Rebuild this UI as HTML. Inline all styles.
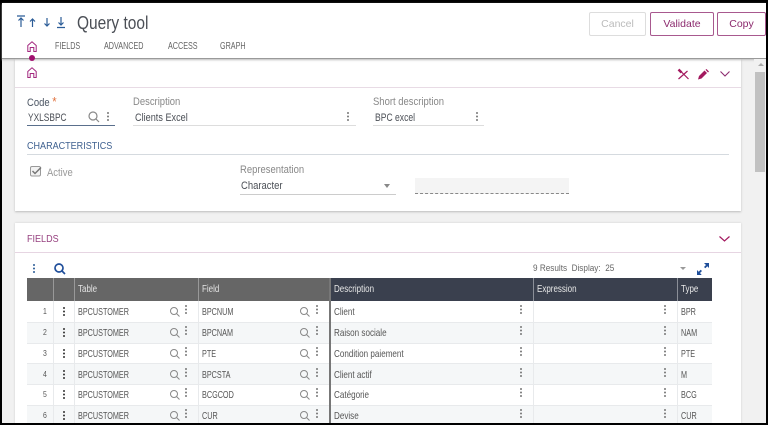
<!DOCTYPE html>
<html><head><meta charset="utf-8"><style>
html,body{margin:0;padding:0;background:#000}
#p{position:relative;width:768px;height:425px;overflow:hidden;background:#000;font-family:"Liberation Sans",sans-serif}
.a{position:absolute}
#p .t{position:absolute;white-space:nowrap;transform:scaleX(.86);transform-origin:0 50%;color:#555;font-size:10px;line-height:12px}
#p .u{transform:scaleX(.72);color:#666;font-size:10px}
#p .c{transform:scaleX(.69);font-size:10.5px}
#p .l{transform:scaleX(.77);font-size:10.5px}
.d{position:absolute;width:2px;height:2px;background:#777;border-radius:50%;box-shadow:0 3.5px 0 #777,0 7px 0 #777}
.k{background:#333;box-shadow:0 3.5px 0 #333,0 7px 0 #333}
svg{position:absolute;overflow:visible}
#b{position:absolute;left:0;top:0;width:768px;height:425px;filter:blur(.3px)}
</style></head><body><div id="p"><div id="b">
<div class="a" style="left:2px;top:3px;width:764px;height:420px;background:#f1f1f1"></div>
<!-- card 1 -->
<div class="a" style="left:15px;top:58px;width:726px;height:153px;background:#fff;box-shadow:0 1px 2px #bbb"></div>
<div class="a" style="left:15px;top:87px;width:726px;height:1px;background:#e8dbe5"></div>
<!-- card 2 -->
<div class="a" style="left:15px;top:223px;width:726px;height:202px;background:#fff;box-shadow:0 0 2px #ccc"></div>
<div class="a" style="left:15px;top:252px;width:726px;height:1px;background:#e6d5e2"></div>
<!-- header -->
<div class="a" style="left:2px;top:3px;width:764px;height:55px;background:#fff;border-bottom:1px solid #9a9a9a;box-shadow:0 1px 2px #bbb"></div>
<!-- scrollbar -->
<div class="a" style="left:754px;top:59px;width:12px;height:364px;background:#f1f1f1"></div>
<div class="a" style="left:755px;top:72px;width:10px;height:100px;background:#c1c1c1"></div>
<div class="a" style="left:758px;top:63px;width:0;height:0;border:3px solid transparent;border-top:0;border-bottom:3px solid #aaa"></div>

<!-- nav arrows -->
<svg style="left:17px;top:15px" width="52" height="14" fill="none" stroke="#2b5c97" stroke-width="1.2">
<path d="M0 1h8M4 12V3M1.500 5.500L4 3l2.500 2.500"/><path d="M15.500 12V4M13 6.500l2.500-2.500 2.500 2.500"/><path d="M30 3v8M27.500 8.500L30 11l2.500-2.500"/><path d="M44 2v8M41.500 7.500L44 10l2.500-2.500M40 12.500h8"/></svg>
<div class="t" style="left:77px;top:13px;font-size:18px;line-height:20px;color:#4b4f56;transform:scaleX(.86)">Query tool</div>
<!-- tabs -->
<svg style="left:27px;top:41px" width="10" height="11" fill="none" stroke="#a3287f" stroke-width="1"><path d="M.8 10.500V4.500L5 .8l4.200 3.700v6H6.800V6.500H3.200v4z"/></svg>
<div class="a" style="left:29px;top:55px;width:6px;height:6px;border-radius:50%;background:#a0106e"></div>
<div class="t u" style="left:55px;top:41px">FIELDS</div>
<div class="t u" style="left:104px;top:41px">ADVANCED</div>
<div class="t u" style="left:168px;top:41px">ACCESS</div>
<div class="t u" style="left:220px;top:41px">GRAPH</div>
<!-- buttons -->
<div class="a" style="left:589px;top:12px;width:55px;height:22px;border:1px solid #ddd;border-radius:2px;text-align:center;font-size:10.500px;line-height:22px;color:#bbb">Cancel</div>
<div class="a" style="left:650px;top:12px;width:62px;height:22px;border:1px solid #a8598f;border-radius:2px;text-align:center;font-size:10.500px;line-height:22px;color:#8c2a6e">Validate</div>
<div class="a" style="left:717px;top:12px;width:47px;height:22px;border:1px solid #a8598f;border-radius:2px;text-align:center;font-size:10.500px;line-height:22px;color:#8c2a6e">Copy</div>

<!-- card 1 content -->
<svg style="left:27px;top:67px" width="10" height="11" fill="none" stroke="#a3287f" stroke-width="1"><path d="M.8 10.500V4.500L5 .8l4.200 3.700v6H6.800V6.500H3.200v4z"/></svg>
<svg style="left:678px;top:69px" width="11" height="11" fill="none" stroke="#a3195f" stroke-width="1.200"><path d="M.5 10L9.500 2M2.500 2l8 8"/><path d="M.5 .5l3 3" stroke-width="2.500"/></svg>
<svg style="left:698px;top:69px" width="11" height="11" fill="#a3195f"><path d="M0 10.500l1-3.500 5.500-5.500 2.500 2.500-5.500 5.500zM7.500.8l1-.8 2.500 2.500-1 1z"/></svg>
<svg style="left:720px;top:71px" width="10" height="6" fill="none" stroke="#8c2a6e" stroke-width="1.100"><path d="M.5.5L5 5 9.500.5"/></svg>

<div class="t" style="left:27px;top:96px;font-size:11px;color:#4b5563">Code <span style="color:#e0703c;font-size:13px">*</span></div>
<div class="t" style="left:133px;top:96px;font-size:11px;color:#888">Description</div>
<div class="t" style="left:373px;top:96px;font-size:11px;color:#888">Short description</div>
<div class="t" style="left:28px;top:112px;font-size:11px;color:#4b4f56;transform:scaleX(.76)">YXLSBPC</div>
<svg style="left:88px;top:111px" width="12" height="12" fill="none" stroke="#888" stroke-width="1.200"><circle cx="5" cy="5" r="4"/><path d="M8 8l3 3"/></svg>
<div class="d" style="left:107px;top:112px"></div>
<div class="a" style="left:27px;top:125px;width:88px;height:1px;background:#5a6f8c"></div>
<div class="t" style="left:135px;top:112px;font-size:11px;color:#4b4f56;transform:scaleX(.83)">Clients Excel</div>
<div class="d" style="left:347px;top:112px"></div>
<div class="a" style="left:133px;top:125px;width:223px;height:1px;background:#ddd"></div>
<div class="t" style="left:375px;top:112px;font-size:11px;color:#4b4f56;transform:scaleX(.78)">BPC excel</div>
<div class="d" style="left:476px;top:112px"></div>
<div class="a" style="left:373px;top:125px;width:111px;height:1px;background:#ddd"></div>
<div class="t" style="left:27px;top:140px;font-size:10.500px;color:#3f6190">CHARACTERISTICS</div>
<div class="a" style="left:27px;top:154px;width:702px;height:1px;background:#d5dadf"></div>
<svg style="left:30px;top:166px" width="12" height="11" fill="none"><rect x=".5" y=".5" width="10" height="9.500" rx="1.500" stroke="#999" fill="#f2f2f2"/><path d="M2.500 5l2.500 2.500L11 1.500" stroke="#777" stroke-width="1.500"/></svg>
<div class="t" style="left:47px;top:167px;font-size:11px;color:#999">Active</div>
<div class="t" style="left:240px;top:164px;font-size:11px;color:#888">Representation</div>
<div class="t" style="left:241px;top:180px;font-size:11px;color:#4b4f56">Character</div>
<div class="a" style="left:240px;top:194px;width:156px;height:1px;background:#ccc"></div>
<div class="a" style="left:384px;top:184px;width:0;height:0;border:3.500px solid transparent;border-bottom:0;border-top:4px solid #888"></div>
<div class="a" style="left:415px;top:178px;width:154px;height:15px;background:#f4f4f4;border-bottom:1px dashed #888"></div>

<!-- card 2 content -->
<div class="t" style="left:27px;top:233px;font-size:10.500px;color:#96407f">FIELDS</div>
<svg style="left:719px;top:236px" width="11" height="6" fill="none" stroke="#a3195f" stroke-width="1.200"><path d="M.5.500L5.500 5 10.500.5"/></svg>
<div class="d" style="left:33px;top:264px;background:#2b5c97;box-shadow:0 3.500px 0 #2b5c97,0 7px 0 #2b5c97"></div>
<svg style="left:54px;top:263px" width="12" height="12" fill="none" stroke="#1f4e9a" stroke-width="1.700"><circle cx="5" cy="5" r="4"/><path d="M8 8l3 3"/></svg>
<div class="t" style="left:533px;top:263px;font-size:9.500px;color:#666">9 Results &nbsp;Display: &nbsp;25</div>
<div class="a" style="left:680px;top:267px;width:0;height:0;border:3.500px solid transparent;border-bottom:0;border-top:3.500px solid #999"></div>
<svg style="left:697px;top:263px" width="12" height="12" fill="#1f4e9a" stroke="none"><path d="M7 0h5v5l-1.700-1.700-2 2-1.300-1.300 2-2zM0 12V7l1.700 1.700 2-2L5 8l-2 2L4.700 12z"/></svg>

<!-- row stripes -->
<div class="a" style="left:27px;top:322px;width:685px;height:21px;background:#f5f7f8"></div>
<div class="a" style="left:27px;top:363px;width:685px;height:21px;background:#f5f7f8"></div>
<div class="a" style="left:27px;top:405px;width:685px;height:18px;background:#f5f7f8"></div>
<!-- row lines -->
<div class="a" style="left:27px;top:322px;width:685px;height:1px;background:#e8eaec"></div>
<div class="a" style="left:27px;top:343px;width:685px;height:1px;background:#e8eaec"></div>
<div class="a" style="left:27px;top:363px;width:685px;height:1px;background:#e8eaec"></div>
<div class="a" style="left:27px;top:384px;width:685px;height:1px;background:#e8eaec"></div>
<div class="a" style="left:27px;top:405px;width:685px;height:1px;background:#e8eaec"></div>
<!-- col lines -->
<div class="a" style="left:53px;top:301px;width:1px;height:122px;background:#e8eaec"></div>
<div class="a" style="left:74px;top:301px;width:1px;height:122px;background:#e8eaec"></div>
<div class="a" style="left:198px;top:301px;width:1px;height:122px;background:#e8eaec"></div>
<div class="a" style="left:533px;top:301px;width:1px;height:122px;background:#e8eaec"></div>
<div class="a" style="left:677px;top:301px;width:1px;height:122px;background:#e8eaec"></div>

<!-- table header -->
<div class="a" style="left:27px;top:278px;width:303px;height:23px;background:#666"></div>
<div class="a" style="left:330px;top:278px;width:382px;height:23px;background:#3a404e"></div>
<div class="a" style="left:53px;top:278px;width:1px;height:23px;background:#999"></div>
<div class="a" style="left:74px;top:278px;width:1px;height:23px;background:#999"></div>
<div class="a" style="left:198px;top:278px;width:1px;height:23px;background:#999"></div>
<div class="a" style="left:533px;top:278px;width:1px;height:23px;background:#8b8f98"></div>
<div class="a" style="left:677px;top:278px;width:1px;height:23px;background:#8b8f98"></div>
<div class="a" style="left:329px;top:278px;width:2px;height:145px;background:#777"></div>
<div class="t" style="left:78px;top:284px;color:#e4e4e4;transform:scaleX(.8)">Table</div>
<div class="t" style="left:202px;top:284px;color:#e4e4e4;transform:scaleX(.8)">Field</div>
<div class="t" style="left:334px;top:284px;color:#e8e8e8;transform:scaleX(.8)">Description</div>
<div class="t" style="left:537px;top:284px;color:#e8e8e8;transform:scaleX(.8)">Expression</div>
<div class="t" style="left:681px;top:284px;color:#e8e8e8;transform:scaleX(.8)">Type</div>

<!-- rows -->
<div style="position:absolute;left:0;top:305px;width:768px;height:20px">
<div class="t" style="left:43px;top:1px;font-size:8px;color:#555">1</div><div class="d k" style="left:63px;top:2px"></div>
<div class="t c" style="left:78px;top:1px">BPCUSTOMER</div><div class="t c" style="left:202px;top:1px">BPCNUM</div>
<svg style="left:170px;top:2px" width="10" height="10" fill="none" stroke="#888"><circle cx="4" cy="4" r="3.500"/><path d="M6.500 6.500L9.500 9.500"/></svg><div class="d" style="left:185px;top:0"></div>
<svg style="left:300px;top:2px" width="10" height="10" fill="none" stroke="#888"><circle cx="4" cy="4" r="3.500"/><path d="M6.500 6.500L9.500 9.500"/></svg><div class="d" style="left:316px;top:0"></div>
<div class="t l" style="left:334px;top:1px">Client</div><div class="d" style="left:520px;top:0"></div><div class="d" style="left:664px;top:0"></div><div class="t c" style="left:681px;top:1px">BPR</div>
</div>
<div style="position:absolute;left:0;top:326px;width:768px;height:20px">
<div class="t" style="left:43px;top:1px;font-size:8px;color:#555">2</div><div class="d k" style="left:63px;top:2px"></div>
<div class="t c" style="left:78px;top:1px">BPCUSTOMER</div><div class="t c" style="left:202px;top:1px">BPCNAM</div>
<svg style="left:170px;top:2px" width="10" height="10" fill="none" stroke="#888"><circle cx="4" cy="4" r="3.500"/><path d="M6.500 6.500L9.500 9.500"/></svg><div class="d" style="left:185px;top:0"></div>
<svg style="left:300px;top:2px" width="10" height="10" fill="none" stroke="#888"><circle cx="4" cy="4" r="3.500"/><path d="M6.500 6.500L9.500 9.500"/></svg><div class="d" style="left:316px;top:0"></div>
<div class="t l" style="left:334px;top:1px">Raison sociale</div><div class="d" style="left:520px;top:0"></div><div class="d" style="left:664px;top:0"></div><div class="t c" style="left:681px;top:1px">NAM</div>
</div>
<div style="position:absolute;left:0;top:347px;width:768px;height:20px">
<div class="t" style="left:43px;top:1px;font-size:8px;color:#555">3</div><div class="d k" style="left:63px;top:2px"></div>
<div class="t c" style="left:78px;top:1px">BPCUSTOMER</div><div class="t c" style="left:202px;top:1px">PTE</div>
<svg style="left:170px;top:2px" width="10" height="10" fill="none" stroke="#888"><circle cx="4" cy="4" r="3.500"/><path d="M6.500 6.500L9.500 9.500"/></svg><div class="d" style="left:185px;top:0"></div>
<svg style="left:300px;top:2px" width="10" height="10" fill="none" stroke="#888"><circle cx="4" cy="4" r="3.500"/><path d="M6.500 6.500L9.500 9.500"/></svg><div class="d" style="left:316px;top:0"></div>
<div class="t l" style="left:334px;top:1px">Condition paiement</div><div class="d" style="left:520px;top:0"></div><div class="d" style="left:664px;top:0"></div><div class="t c" style="left:681px;top:1px">PTE</div>
</div>
<div style="position:absolute;left:0;top:368px;width:768px;height:20px">
<div class="t" style="left:43px;top:1px;font-size:8px;color:#555">4</div><div class="d k" style="left:63px;top:2px"></div>
<div class="t c" style="left:78px;top:1px">BPCUSTOMER</div><div class="t c" style="left:202px;top:1px">BPCSTA</div>
<svg style="left:170px;top:2px" width="10" height="10" fill="none" stroke="#888"><circle cx="4" cy="4" r="3.500"/><path d="M6.500 6.500L9.500 9.500"/></svg><div class="d" style="left:185px;top:0"></div>
<svg style="left:300px;top:2px" width="10" height="10" fill="none" stroke="#888"><circle cx="4" cy="4" r="3.500"/><path d="M6.500 6.500L9.500 9.500"/></svg><div class="d" style="left:316px;top:0"></div>
<div class="t l" style="left:334px;top:1px">Client actif</div><div class="d" style="left:520px;top:0"></div><div class="d" style="left:664px;top:0"></div><div class="t c" style="left:681px;top:1px">M</div>
</div>
<div style="position:absolute;left:0;top:388px;width:768px;height:20px">
<div class="t" style="left:43px;top:1px;font-size:8px;color:#555">5</div><div class="d k" style="left:63px;top:2px"></div>
<div class="t c" style="left:78px;top:1px">BPCUSTOMER</div><div class="t c" style="left:202px;top:1px">BCGCOD</div>
<svg style="left:170px;top:2px" width="10" height="10" fill="none" stroke="#888"><circle cx="4" cy="4" r="3.500"/><path d="M6.500 6.500L9.500 9.500"/></svg><div class="d" style="left:185px;top:0"></div>
<svg style="left:300px;top:2px" width="10" height="10" fill="none" stroke="#888"><circle cx="4" cy="4" r="3.500"/><path d="M6.500 6.500L9.500 9.500"/></svg><div class="d" style="left:316px;top:0"></div>
<div class="t l" style="left:334px;top:1px">Catégorie</div><div class="d" style="left:520px;top:0"></div><div class="d" style="left:664px;top:0"></div><div class="t c" style="left:681px;top:1px">BCG</div>
</div>
<div style="position:absolute;left:0;top:409px;width:768px;height:14px;overflow:hidden">
<div class="t" style="left:43px;top:1px;font-size:8px;color:#555">6</div><div class="d k" style="left:63px;top:2px"></div>
<div class="t c" style="left:78px;top:1px">BPCUSTOMER</div><div class="t c" style="left:202px;top:1px">CUR</div>
<svg style="left:170px;top:2px" width="10" height="10" fill="none" stroke="#888"><circle cx="4" cy="4" r="3.500"/><path d="M6.500 6.500L9.500 9.500"/></svg><div class="d" style="left:185px;top:0"></div>
<svg style="left:300px;top:2px" width="10" height="10" fill="none" stroke="#888"><circle cx="4" cy="4" r="3.500"/><path d="M6.500 6.500L9.500 9.500"/></svg><div class="d" style="left:316px;top:0"></div>
<div class="t l" style="left:334px;top:1px">Devise</div><div class="d" style="left:520px;top:0"></div><div class="d" style="left:664px;top:0"></div><div class="t c" style="left:681px;top:1px">CUR</div>
</div>
<!-- black frame -->
<div class="a" style="left:0;top:423px;width:768px;height:2px;background:#000"></div>
<div class="a" style="left:766px;top:0;width:2px;height:425px;background:#000"></div>
</div></div></body></html>
